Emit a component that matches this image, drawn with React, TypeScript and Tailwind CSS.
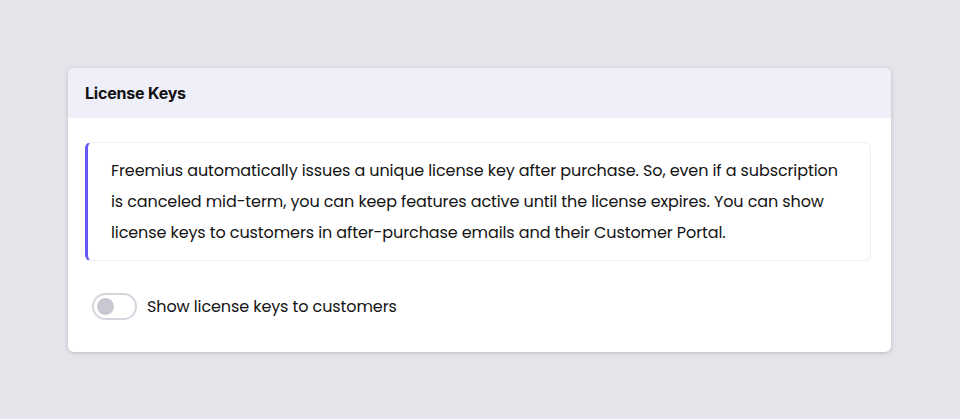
export default function App() {
  return (
    <div
      className="min-h-[419px] w-full bg-[#e3e5ea] pt-[68px] pl-[68px] pr-[69px]"
      style={{ fontFamily: 'Poppins, "Open Sans", sans-serif' }}
    >
      <div className="rounded-md bg-white shadow-[0_1px_4px_rgba(0,0,0,0.18)] overflow-hidden">
        <div className="h-[50px] bg-[#efeff9] px-[17px] flex items-center">
          <h2
            className="text-[16px] font-bold text-[#111] tracking-[-0.2px]"
            style={{ fontFamily: 'Inter, sans-serif' }}
          >
            License Keys
          </h2>
        </div>
        <div className="pt-[24px] pb-[32px] pl-[17px] pr-[20px]">
          <div className="rounded-md border border-[#efeff5] border-l-[3px] border-l-[#6259f5] pl-[23px] pr-[20px] py-[12px]">
            <p className="text-[16px] leading-[31px] text-[#141414] tracking-[-0.1px] whitespace-nowrap">
              Freemius automatically issues a unique license key after purchase. So, even if a subscription
              <br />
              is canceled mid-term, you can keep features active until the license expires. You can show
              <br />
              license keys to customers in after-purchase emails and their Customer Portal.
            </p>
          </div>
          <div className="mt-[32px] pl-[7px] flex items-center gap-[10px]">
            <button className="relative w-[45px] h-[27px] rounded-full border-2 border-[#d6d6de] bg-white">
              <span className="absolute left-[3px] top-[3px] w-[17px] h-[17px] rounded-full bg-[#c8c8d2]" />
            </button>
            <span className="text-[16px] text-[#141414] tracking-[-0.1px]">Show license keys to customers</span>
          </div>
        </div>
      </div>
    </div>
  );
}
